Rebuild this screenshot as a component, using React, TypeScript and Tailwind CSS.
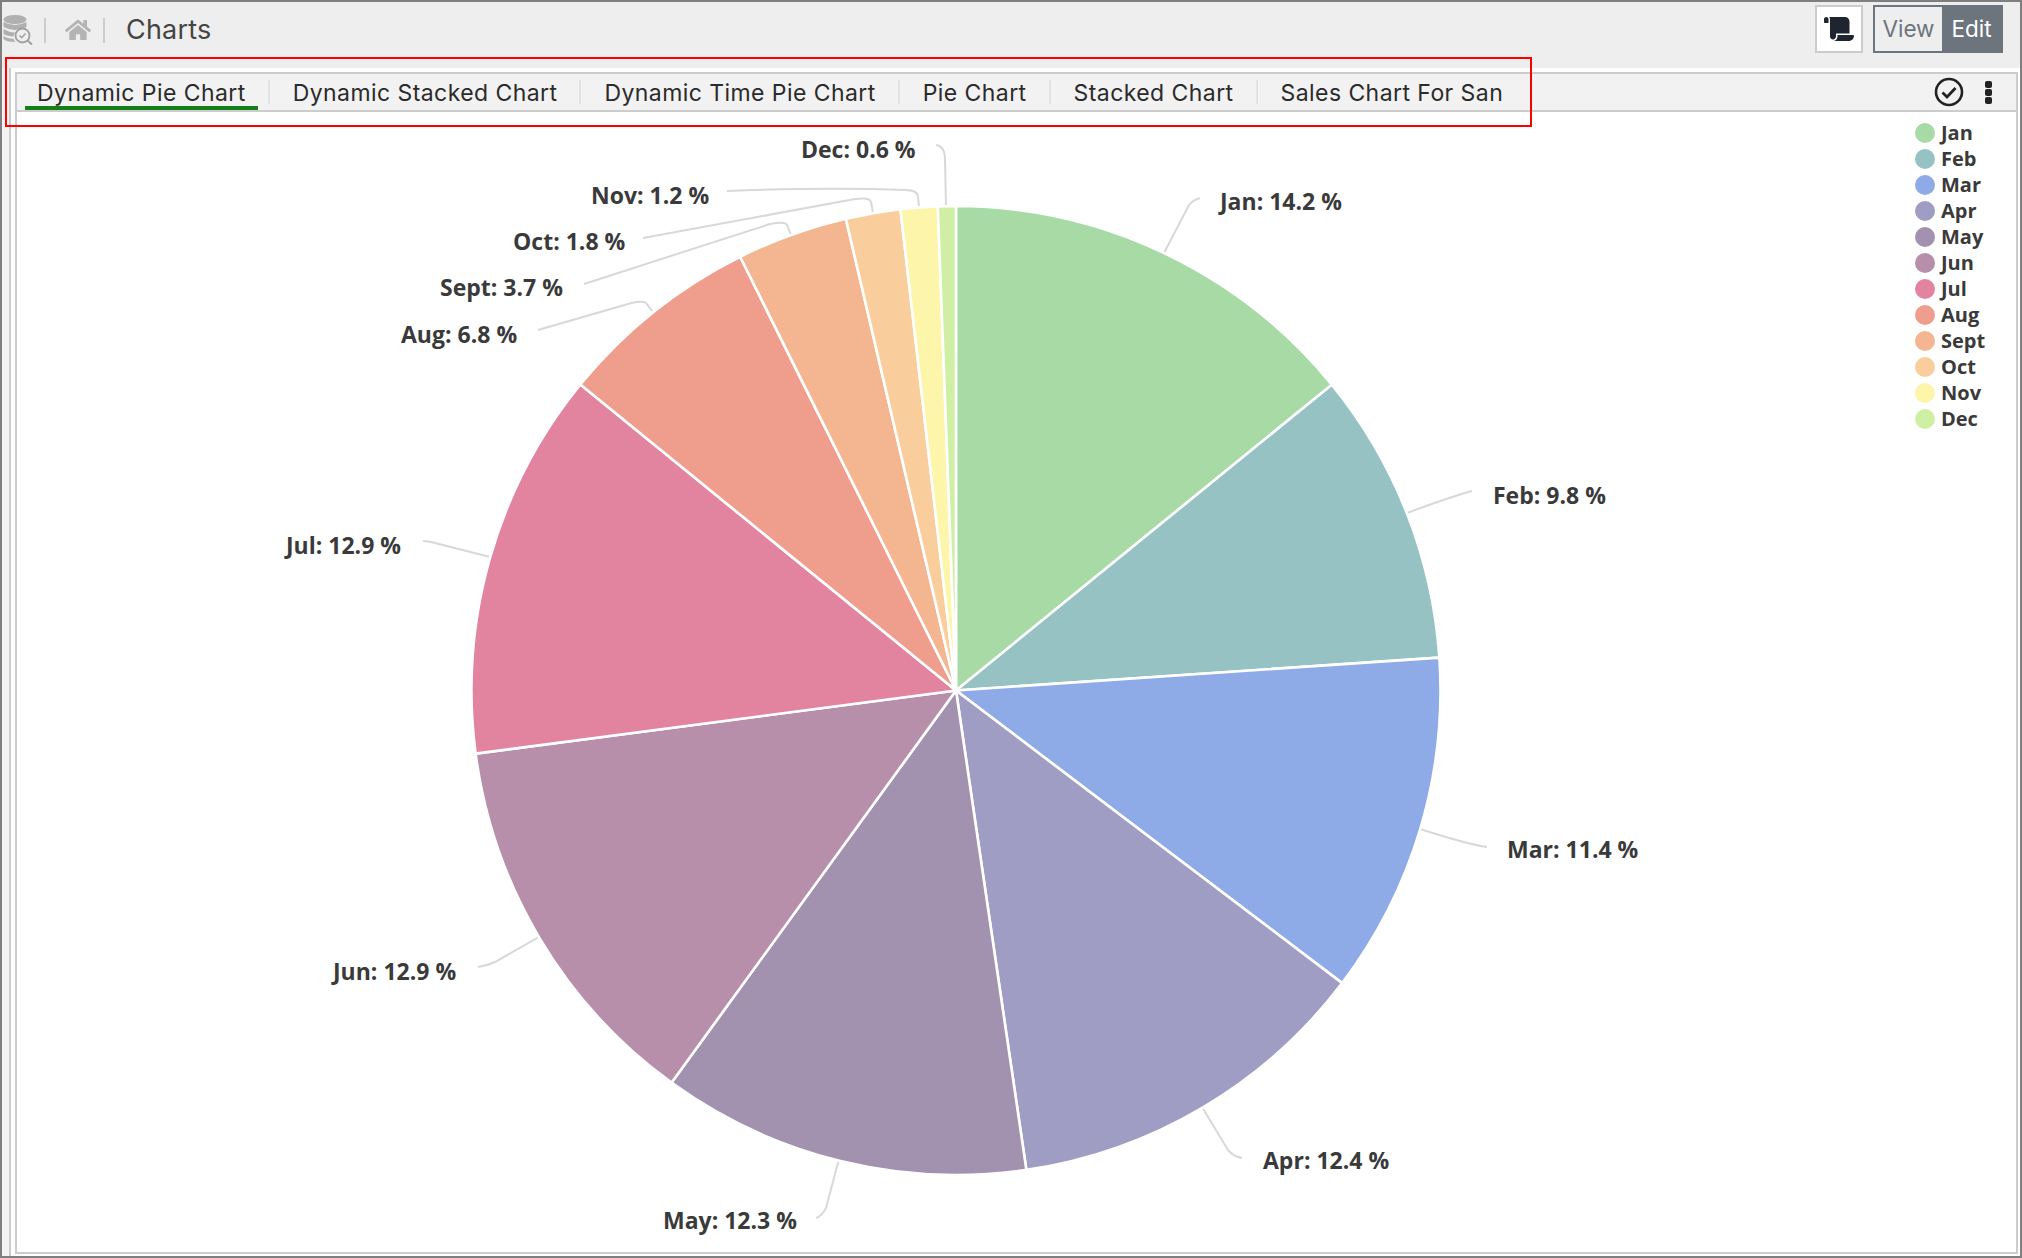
import React from 'react';
import { FaHome, FaScroll } from 'react-icons/fa';

const CX = 956;
const CY = 690.5;
const R = 484.5;

const slices = [
  { name: 'Jan', pct: 14.2, end: 14.13, color: '#a8daa5', lx: 1220, ly: 210, line: 'M1164 253 L1189 205 Q1193 200 1200 198' },
  { name: 'Feb', pct: 9.8, end: 23.92, color: '#97c2c3', lx: 1493, ly: 504, line: 'M1407 513 Q1450 497 1472 491' },
  { name: 'Mar', pct: 11.4, end: 35.32, color: '#8eabe7', lx: 1507, ly: 858, line: 'M1420 829 Q1470 845 1487 847' },
  { name: 'Apr', pct: 12.4, end: 47.68, color: '#9f9dc3', lx: 1263, ly: 1169, line: 'M1202 1107 L1228 1150 Q1234 1157 1242 1158' },
  { name: 'May', pct: 12.3, end: 59.99, color: '#a291af', lx: 663, ly: 1229, line: 'M839 1159 L826 1208 Q822 1216 816 1218' },
  { name: 'Jun', pct: 12.9, end: 72.92, color: '#b78faa', lx: 333, ly: 980, line: 'M539 937 L495 962 Q486 966 478 967' },
  { name: 'Jul', pct: 12.9, end: 85.88, color: '#e283a0', lx: 286, ly: 554, line: 'M490 557 L435 543 Q428 541 423 541' },
  { name: 'Aug', pct: 6.8, end: 92.65, color: '#ef9d8c', lx: 401, ly: 343, line: 'M538 330 L628 304 Q642 300 646 303 L653 312' },
  { name: 'Sept', pct: 3.7, end: 96.35, color: '#f4b591', lx: 440, ly: 296, line: 'M584 284 L770 224 Q785 221 787 225 L791 235' },
  { name: 'Oct', pct: 1.8, end: 98.17, color: '#facd9c', lx: 513, ly: 250, line: 'M643 238 L855 199 Q870 197 871 202 L873 213' },
  { name: 'Nov', pct: 1.2, end: 99.4, color: '#fdf5aa', lx: 591, ly: 204, line: 'M727 191 Q830 187 905 190 Q918 190 918 197 L919 207' },
  { name: 'Dec', pct: 0.6, end: 100, color: '#cff0a4', lx: 801, ly: 158, line: 'M936 145 Q945 146 945 160 L946 206' },
];

const tabs = ['Dynamic Pie Chart', 'Dynamic Stacked Chart', 'Dynamic Time Pie Chart', 'Pie Chart', 'Stacked Chart', 'Sales Chart For San'];

const point = (pct: number) => {
  const a = (pct / 100) * Math.PI * 2;
  return `${CX + R * Math.sin(a)} ${CY - R * Math.cos(a)}`;
};

const DbIcon = () => (
  <svg width="30" height="30" viewBox="0 0 30 30" className="shrink-0">
    <ellipse cx="12" cy="4.5" rx="11.5" ry="4.5" fill="#b0b0b0" />
    <path d="M0.5 7 Q12 13 23.5 7 V12 Q12 18 0.5 12 Z" fill="#b0b0b0" />
    <path d="M0.5 14 Q6 17.5 12 17.6 A9 9 0 0 0 10.5 21.5 Q4 21 0.5 19 Z" fill="#b0b0b0" />
    <path d="M0.5 21 Q4 23.5 10.5 23.8 Q11 25.5 12.5 27 Q3 27 0.5 24 Z" fill="#b0b0b0" />
    <circle cx="19.5" cy="20.5" r="7" fill="#eeeeee" stroke="#a0a0a0" strokeWidth="1.8" />
    <path d="M16.5 20.5 L18.7 22.7 L22.5 18.5" fill="none" stroke="#a0a0a0" strokeWidth="1.5" />
    <path d="M24.5 25.5 L29 29.5" stroke="#a0a0a0" strokeWidth="2" />
  </svg>
);

const CheckCircle = () => (
  <svg width="30" height="30" viewBox="0 0 30 30" className="shrink-0">
    <circle cx="15" cy="15" r="13" fill="none" stroke="#222222" strokeWidth="2.6" />
    <path d="M8.5 15.5 L13 20 L21.5 11" fill="none" stroke="#222222" strokeWidth="2.8" />
  </svg>
);

export default function App() {
  let prev = 0;
  return (
    <div className="relative w-[2022px] h-[1258px] border-2 border-[#7f7f7f] bg-[#f3f3f3] flex flex-col font-['Inter',sans-serif] overflow-hidden">
      {/* Top bar */}
      <div className="h-[66px] shrink-0 bg-[#eeeeee] flex items-start pl-px pr-[17px] pt-[3px]">
        <div className="flex items-center h-[50px]">
          <DbIcon />
          <div className="w-[2px] h-[25px] bg-[#cccccc] ml-[11px]" />
          <FaHome className="ml-[19px] text-[#b4b4b4]" size={26} />
          <div className="w-[2px] h-[25px] bg-[#cccccc] ml-[12px]" />
          <span className="ml-[21px] mb-[2px] text-[27px] leading-none text-[#444444] tracking-[0.2px]">Charts</span>
        </div>
        <div className="ml-auto flex items-center gap-[10px]">
          <button className="w-[48px] h-[48px] border-2 border-[#cccccc] bg-white flex items-center justify-center">
            <FaScroll className="text-[#1f2530]" size={30} />
          </button>
          <div className="flex h-[48px] w-[130px] border-2 border-[#6c757d] text-[22.5px]">
            <span className="w-[67px] flex items-center justify-center text-[#6c757d] bg-[#eeeeee]">View</span>
            <span className="flex-1 flex items-center justify-center text-white bg-[#6c757d]">Edit</span>
          </div>
        </div>
      </div>

      {/* Body */}
      <div className="flex-1 flex min-h-0 pl-[7px]">
        <div className="flex-1 flex min-w-0 border-l-2 border-[#cccccc] bg-white pl-[4px] pr-[2px] pb-[2px] pt-[4px]">
          <div className="flex-1 flex flex-col min-w-0 border-2 border-[#cccccc]">
            <div className="h-[36px] shrink-0 bg-[#f2f2f2] flex items-end pl-[8px] pr-[24px]">
              {tabs.map((t, i) => (
                <React.Fragment key={t}>
                  {i > 0 && <div className="w-[2px] h-[24px] bg-[#dfe3e8] ml-[10px] mr-[11px] mb-[6px]" />}
                  <div className={`h-[36px] px-[12px] pt-[5px] text-[23px] leading-[28px] text-[#2b2b2b] tracking-[0.43px] whitespace-nowrap border-b-4 ${i === 0 ? 'border-[#15801a]' : 'border-transparent'}`}>
                    {t}
                  </div>
                </React.Fragment>
              ))}
              <div className="ml-auto flex items-center gap-[21px] h-[36px]">
                <CheckCircle />
                <div className="flex flex-col gap-px">
                  <span className="w-[7px] h-[7px] rounded-[2px] bg-[#222222]" />
                  <span className="w-[7px] h-[7px] rounded-[2px] bg-[#222222]" />
                  <span className="w-[7px] h-[7px] rounded-[2px] bg-[#222222]" />
                </div>
              </div>
            </div>
            <div className="relative flex-1 min-h-0 bg-white border-t-2 border-[#cccccc]">
              <svg width="1999" height="1140" viewBox="17 112 1999 1140" className="block font-['Open_Sans',sans-serif]">
                {slices.map((s) => (
                  <path key={s.name} d={s.line} fill="none" stroke="#d8d8d8" strokeWidth="2" />
                ))}
                {slices.map((s) => {
                  const start = prev;
                  prev = s.end;
                  return (
                    <path
                      key={s.name}
                      d={`M${CX} ${CY} L${point(start)} A${R} ${R} 0 0 1 ${point(s.end)} Z`}
                      fill={s.color}
                      stroke="#ffffff"
                      strokeWidth="2.6"
                      strokeLinejoin="round"
                    />
                  );
                })}
                {slices.map((s) => (
                  <text key={s.name} x={s.lx} y={s.ly} fontSize="23" fontWeight="700" fill="#3a3a3a">
                    {s.name}: {s.pct.toFixed(1)} %
                  </text>
                ))}
              </svg>
              {/* Legend */}
              <div className="absolute left-[1898px] top-[7.5px] flex flex-col font-['Open_Sans',sans-serif] text-[20px] font-bold text-[#3a3a3a]">
                {slices.map((s) => (
                  <div key={s.name} className="h-[26px] flex items-center gap-[6px]">
                    <span className="w-[20px] h-[20px] rounded-full" style={{ backgroundColor: s.color }} />
                    <span className="leading-none">{s.name}</span>
                  </div>
                ))}
              </div>
            </div>
          </div>
        </div>
      </div>

      {/* Red highlight box */}
      <div className="absolute left-[3px] top-[55px] w-[1527px] h-[70px] border-2 border-[#ff0000] pointer-events-none" />
    </div>
  );
}
